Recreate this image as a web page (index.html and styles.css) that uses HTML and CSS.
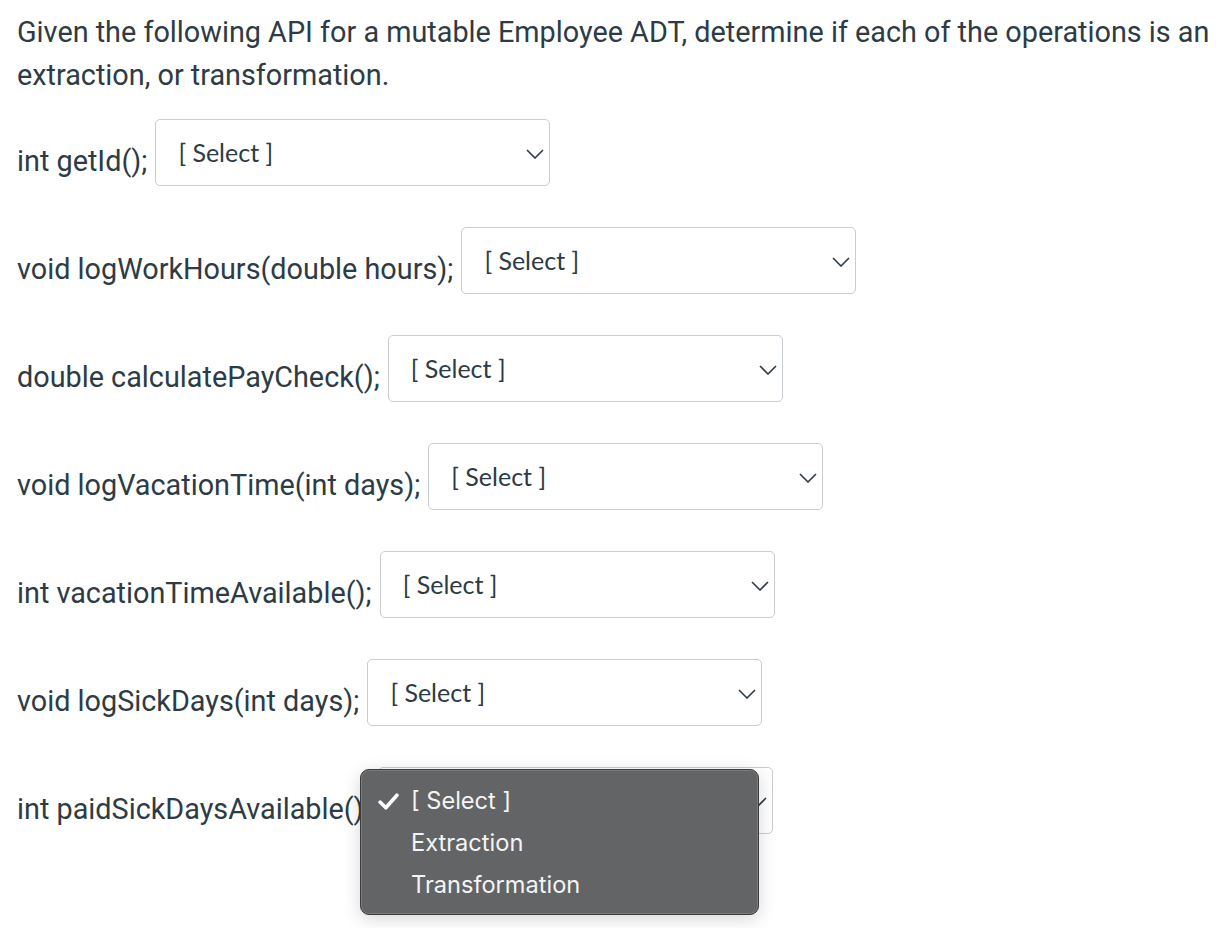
FILE: index.html
```html
<!DOCTYPE html>
<html lang="en">
<head>
<meta charset="UTF-8" />
<title>Employee ADT Quiz</title>
<link rel="stylesheet" href="styles.css">
</head>
<body>
  <div id="question" role="main">
    <p class="prompt">Given the following API for a mutable Employee ADT, determine if each of the operations is an extraction, or transformation.</p>

    <div class="row">
      <span class="label">int getId();</span>
      <div class="select"><span>[ Select ]</span><svg class="chevron" viewBox="0 0 18 10"><path d="M1 1l8 8 8-8"/></svg></div>
    </div>
    <div class="row">
      <span class="label">void logWorkHours(double hours);</span>
      <div class="select"><span>[ Select ]</span><svg class="chevron" viewBox="0 0 18 10"><path d="M1 1l8 8 8-8"/></svg></div>
    </div>
    <div class="row">
      <span class="label">double calculatePayCheck();</span>
      <div class="select"><span>[ Select ]</span><svg class="chevron" viewBox="0 0 18 10"><path d="M1 1l8 8 8-8"/></svg></div>
    </div>
    <div class="row">
      <span class="label">void logVacationTime(int days);</span>
      <div class="select"><span>[ Select ]</span><svg class="chevron" viewBox="0 0 18 10"><path d="M1 1l8 8 8-8"/></svg></div>
    </div>
    <div class="row">
      <span class="label">int vacationTimeAvailable();</span>
      <div class="select"><span>[ Select ]</span><svg class="chevron" viewBox="0 0 18 10"><path d="M1 1l8 8 8-8"/></svg></div>
    </div>
    <div class="row">
      <span class="label">void logSickDays(int days);</span>
      <div class="select"><span>[ Select ]</span><svg class="chevron" viewBox="0 0 18 10"><path d="M1 1l8 8 8-8"/></svg></div>
    </div>
    <div class="row open">
      <span class="label">int paidSickDaysAvailable();</span>
      <div class="select"><span>[ Select ]</span><svg class="chevron" viewBox="0 0 18 10"><path d="M1 1l8 8 8-8"/></svg></div>
      <ul class="menu" role="listbox">
        <li class="checked"><svg class="check" viewBox="0 0 20 16"><path d="M2 8.5l5.5 5.5L18 2"/></svg>[ Select ]</li>
        <li>Extraction</li>
        <li>Transformation</li>
      </ul>
    </div>
  </div>
</body>
</html>
```

FILE: styles.css
```css
* {
  box-sizing: border-box;
}
html, body {
  margin: 0;
  padding: 0;
  background: #fff;
}
#question {
  padding: 11px 0 12px 17px;
  width: 1225px;
  min-height: 928px;
  font-family: Roboto, 'Liberation Sans', sans-serif;
  color: #2d3b45;
}
.prompt {
  margin: 0 0 22px;
  font-size: 28.8px;
  line-height: 43px;
}
.row {
  position: relative;
  display: flex;
  align-items: center;
  height: 67px;
  margin-bottom: 41px;
}
.label {
  font-size: 28.8px;
  padding-top: 16px;
  margin-right: 8px;
  white-space: nowrap;
}
.select {
  width: 395px;
  height: 67px;
  border: 1px solid #c7cdd1;
  border-radius: 5px;
  display: flex;
  justify-content: space-between;
  align-items: flex-start;
  padding: 17px 5px 0 22px;
  font-family: Lato, sans-serif;
  font-size: 25px;
  line-height: 30px;
}
.chevron {
  width: 18px;
  height: 10px;
  margin-top: 12px;
  fill: none;
  stroke: #2d3b45;
  stroke-width: 1.6;
}
/* open native-looking dropdown over the last select */
.menu {
  position: absolute;
  left: 343px;
  top: 2px;
  width: 399px;
  height: 146px;
  margin: 0;
  padding: 10px 0 0;
  list-style: none;
  background: #636466;
  border: 1px solid #3c3c3e;
  border-radius: 9px;
  box-shadow: inset 0 0 0 1px #7a7b7d, 0 4px 18px rgba(0, 0, 0, 0.16);
  font-family: Inter, 'Noto Sans', sans-serif;
  font-size: 23.6px;
  color: #f4f4f4;
}
.menu li {
  position: relative;
  height: 42px;
  line-height: 42px;
  padding-left: 50px;
}
.check {
  position: absolute;
  left: 17px;
  top: 13px;
  width: 21px;
  height: 17px;
  fill: none;
  stroke: #fff;
  stroke-width: 3.4;
  stroke-linecap: round;
  stroke-linejoin: round;
}
```
